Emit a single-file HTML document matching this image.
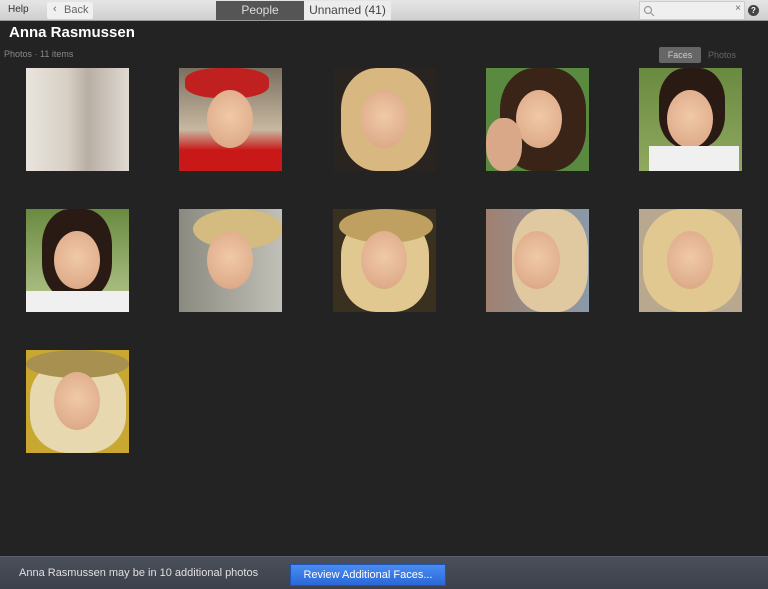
<!DOCTYPE html>
<html><head><style>
*{margin:0;padding:0;box-sizing:border-box}
body{width:768px;height:589px;background:#232323;font-family:"Liberation Sans",sans-serif;position:relative;overflow:hidden}
.top{position:absolute;left:0;top:0;width:768px;height:21px;background:linear-gradient(#e6e6e6,#cfcfcf);border-bottom:1px solid #999}
.t{position:absolute;font-size:10px;color:#333}
.back{position:absolute;left:47px;top:2px;width:46px;height:17px;background:#f0f0f0;border-radius:2px;font-size:11px;color:#666;line-height:17px;padding-left:17px}
.seg1{position:absolute;left:216px;top:1px;width:88px;height:19px;background:#555;color:#ddd;font-size:12px;text-align:center;line-height:19px}
.seg2{position:absolute;left:304px;top:1px;width:87px;height:19px;background:#ececec;color:#444;font-size:12px;text-align:center;line-height:19px}
.search{position:absolute;left:639px;top:1px;width:106px;height:19px;background:#efefef;border:1px solid #ccc}
.ph{position:absolute;width:103px;height:103px;overflow:hidden}
.face{position:absolute;left:28px;top:22px;width:46px;height:58px;border-radius:50%;background:radial-gradient(circle at 50% 45%,#f0c9a8,#d9a280)}
.bot{position:absolute;left:0;top:556px;width:768px;height:33px;background:linear-gradient(#4a4f5a,#3c414b);border-top:1px solid #5a5f6a}
</style></head><body>
<div class="top">
<div class="t" style="left:8px;top:4px">Help</div>
<div class="back"><span style="position:absolute;left:6px;top:-1px">‹</span>Back</div>
<div class="seg1">People</div><div class="seg2">Unnamed (41)</div>
<div class="search"><svg width="12" height="12" style="position:absolute;left:3px;top:3px"><circle cx="5" cy="5" r="3.5" fill="none" stroke="#999" stroke-width="1.2"/><path d="M7.5 7.5L11 11" stroke="#999" stroke-width="1.2"/></svg><span style="position:absolute;right:3px;top:1px;font-size:10px;color:#666">×</span></div>
<div style="position:absolute;left:748px;top:5px;width:11px;height:11px;border-radius:50%;background:#444;color:#fff;font-size:8px;text-align:center;line-height:11px;font-weight:bold">?</div>
</div>
<div style="position:absolute;left:9px;top:24px;font-size:15px;font-weight:bold;color:#fff">Anna Rasmussen</div>
<div style="position:absolute;left:4px;top:49px;font-size:9px;color:#888">Photos · 11 items</div>
<div style="position:absolute;left:659px;top:47px;width:42px;height:16px;background:#666;border-radius:2px;color:#ccc;font-size:9px;text-align:center;line-height:16px">Faces</div>
<div style="position:absolute;left:708px;top:50px;font-size:9px;color:#666">Photos</div>

<div class="ph" style="left:26px;top:68px;background:linear-gradient(90deg,#e8e4dd,#d8d0c6 40%,#b8aea4 60%,#e0dad2)"></div>
<div class="ph" style="left:179px;top:68px;background:linear-gradient(#7a7060,#c8b8a0 60%,#c81818 80%)"><div style="position:absolute;left:6px;top:0;width:84px;height:30px;background:#c02020;border-radius:40%"></div><div class="face"></div></div>
<div class="ph" style="left:333px;top:68px;background:#2a2420"><div style="position:absolute;left:8px;top:0;width:90px;height:103px;background:#d8b880;border-radius:40%"></div><div class="face"></div></div>
<div class="ph" style="left:486px;top:68px;background:#5a8a40"><div style="position:absolute;left:14px;top:0;width:86px;height:103px;background:#3a2418;border-radius:40%"></div><div class="face" style="left:30px"></div><div style="position:absolute;left:0;top:50px;width:36px;height:53px;border-radius:45%;background:#d8a888"></div></div>
<div class="ph" style="left:639px;top:68px;background:linear-gradient(#6a8a40,#90a860)"><div style="position:absolute;left:20px;top:0;width:66px;height:80px;background:#2a1a14;border-radius:40%"></div><div class="face"></div><div style="position:absolute;left:10px;top:78px;width:90px;height:30px;background:#f0f0f0"></div></div>

<div class="ph" style="left:26px;top:209px;background:linear-gradient(#6a8a40,#b8c890)"><div style="position:absolute;left:16px;top:0;width:70px;height:90px;background:#2a1a14;border-radius:40%"></div><div class="face"></div><div style="position:absolute;left:0;top:82px;width:103px;height:21px;background:#f0f0f0"></div></div>
<div class="ph" style="left:179px;top:209px;background:linear-gradient(90deg,#8a8a80,#c0c0b8)"><div style="position:absolute;left:14px;top:0;width:90px;height:40px;background:#d4bc80;border-radius:50%"></div><div class="face"></div></div>
<div class="ph" style="left:333px;top:209px;background:#3a3020"><div style="position:absolute;left:8px;top:8px;width:88px;height:95px;background:#e0c890;border-radius:40%"></div><div style="position:absolute;left:6px;top:0;width:94px;height:34px;background:#c0a060;border-radius:50%"></div><div class="face"></div></div>
<div class="ph" style="left:486px;top:209px;background:linear-gradient(90deg,#a08070,#8a9aa8)"><div style="position:absolute;left:26px;top:0;width:76px;height:103px;background:#e0c8a0;border-radius:40%"></div><div class="face"></div></div>
<div class="ph" style="left:639px;top:209px;background:#b8a890"><div style="position:absolute;left:4px;top:0;width:98px;height:103px;background:#e0c890;border-radius:40%"></div><div class="face"></div></div>

<div class="ph" style="left:26px;top:350px;background:#c8a830"><div style="position:absolute;left:4px;top:10px;width:96px;height:93px;background:#e8d8b0;border-radius:40%"></div><div style="position:absolute;left:0;top:0;width:103px;height:28px;background:#a89050;border-radius:50%"></div><div class="face"></div></div>

<div class="bot">
<div style="position:absolute;left:19px;top:10px;font-size:11px;color:#e0e0e0">Anna Rasmussen may be in 10 additional photos</div>
<div style="position:absolute;left:290px;top:7px;width:156px;height:22px;background:linear-gradient(#4a8cf0,#2a68d8);border:1px solid #1e55b5;color:#fff;font-size:11px;text-align:center;line-height:20px">Review Additional Faces...</div>
</div>
</body></html>
